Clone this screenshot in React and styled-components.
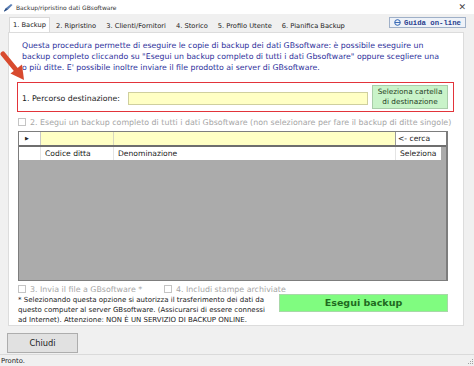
import React from "react";
import styled, { createGlobalStyle } from "styled-components";

const GlobalStyle = createGlobalStyle`
  html, body {
    margin: 0;
    padding: 0;
  }
  body {
    width: 474px;
    height: 366px;
    overflow: hidden;
    background: #f0f0f0;
    font-family: "DejaVu Sans", Verdana, sans-serif;
  }
`;

const Window = styled.div`
  position: relative;
  width: 474px;
  height: 366px;
  display: flex;
  flex-direction: column;
  background: #f0f0f0;
`;

const TitleBar = styled.div`
  height: 14px;
  flex: none;
  background: #fff;
  display: flex;
  align-items: center;
  gap: 3px;
  padding: 0 8px 0 3px;
  font-size: 6px;
  color: #333;
`;

const TitleText = styled.span`
  flex: 1;
`;

const Close = styled.span`
  font-size: 9px;
  color: #444;
`;

const TabBar = styled.div`
  height: 18px;
  flex: none;
  display: flex;
  align-items: flex-end;
  padding: 0 8px 0 9px;
`;

const Tab = styled.div`
  height: ${(p) => (p.active ? 15 : 13)}px;
  box-sizing: border-box;
  padding: 0 3px;
  margin-right: ${(p) => (p.active ? 2 : 2)}px;
  display: flex;
  align-items: center;
  font-size: 6.7px;
  color: #222;
  background: ${(p) => (p.active ? "#fff" : "#f0f0f0")};
  border: 1px solid ${(p) => (p.active ? "#d9d9d9" : "transparent")};
  border-bottom: none;
  white-space: nowrap;
`;

const GuideButton = styled.div`
  margin-left: auto;
  align-self: flex-start;
  margin-top: 3px;
  height: 11px;
  box-sizing: border-box;
  display: flex;
  align-items: center;
  gap: 3px;
  padding: 0 4px;
  background: #eef2f8;
  border: 1px solid #9fb0c8;
  font-family: "Liberation Mono", "DejaVu Sans Mono", monospace;
  font-weight: bold;
  font-size: 7.3px;
  color: #2a3f8f;
`;

const Panel = styled.div`
  height: 294px;
  flex: none;
  box-sizing: border-box;
  margin: 0 10px 0 8px;
  padding: 7px 9px 0 8px;
  background: #fff;
  border: 1px solid #dcdcdc;
  display: flex;
  flex-direction: column;
`;

const Intro = styled.div`
  padding-left: 5px;
  font-size: 7.8px;
  line-height: 11px;
  color: #2d2f9a;
  white-space: nowrap;
`;

const RedBox = styled.div`
  margin-top: 9px;
  width: 437px;
  height: 30px;
  box-sizing: border-box;
  border: 1.5px solid #e2343a;
  display: flex;
  align-items: center;
  padding: 0 5px 0 4px;
`;

const Label = styled.span`
  font-size: 7.8px;
  color: #222;
  white-space: nowrap;
  width: 106px;
  padding-top: 3px;
`;

const PathInput = styled.div`
  width: 240px;
  height: 13px;
  box-sizing: border-box;
  margin-top: 3px;
  background: #ffffc4;
  border: 1px solid #cfcf9e;
`;

const GreenButton = styled.div`
  margin-left: 4px;
  width: 76px;
  height: 24px;
  box-sizing: border-box;
  display: flex;
  align-items: center;
  justify-content: center;
  text-align: center;
  font-size: 7.3px;
  line-height: 10px;
  color: #1f3d1f;
  background: #c9f3c9;
  border: 1px solid #a9cda9;
`;

const CheckRow = styled.div`
  display: flex;
  align-items: center;
  gap: 4px;
  height: 11px;
  margin-left: 1px;
  font-size: ${(p) => p.size || 7.9}px;
  color: #a6a6a6;
  white-space: nowrap;
`;

const Box = styled.span`
  width: 8px;
  height: 8px;
  box-sizing: border-box;
  border: 1px solid #c4c4c4;
  background: #fff;
  flex: none;
`;

const Grid = styled.div`
  margin: 3px 0 0 1px;
  width: 430px;
  height: 151px;
  box-sizing: border-box;
  border: 1px solid #7d7d7d;
  border-right-width: 2px;
  background: #ababab;
  display: flex;
  flex-direction: column;
`;

const SearchRow = styled.div`
  height: 13px;
  flex: none;
  display: grid;
  grid-template-columns: 22px 73px 282px 1fr;
  border-bottom: 2px solid #6e6e6e;
`;

const Cell = styled.div`
  box-sizing: border-box;
  background: ${(p) => p.bg || "#fff"};
  border-right: 1px solid ${(p) => p.line || "#d8d8c0"};
  display: flex;
  align-items: center;
  padding-left: ${(p) => p.pad || 4}px;
  font-size: ${(p) => p.size || 7.6}px;
  color: #222;
  white-space: nowrap;
`;

const HeaderRow = styled.div`
  height: 13px;
  flex: none;
  display: grid;
  grid-template-columns: 22px 73px 282px 45px;
`;

const OptionsRow = styled.div`
  margin-top: 3px;
  display: flex;
  align-items: center;
`;

const BottomRow = styled.div`
  display: flex;
  align-items: flex-start;
  margin-left: 1px;
`;

const Note = styled.div`
  width: 261px;
  font-size: 7px;
  line-height: 10px;
  color: #222;
  white-space: nowrap;
`;

const RunButton = styled.div`
  margin-top: -1px;
  width: 169px;
  height: 18px;
  box-sizing: border-box;
  display: flex;
  align-items: center;
  justify-content: center;
  background: #80fc80;
  border: 1px solid #a8d8a8;
  font-weight: bold;
  font-size: 9.5px;
  color: #1f6a1f;
`;

const Footer = styled.div`
  height: 28px;
  flex: none;
  display: flex;
  align-items: flex-start;
  padding: 7px 0 0 7px;
  box-sizing: border-box;
`;

const CloseButton = styled.div`
  width: 71px;
  height: 20px;
  box-sizing: border-box;
  display: flex;
  align-items: center;
  justify-content: center;
  background: #e1e1e1;
  border: 1px solid #adadad;
  font-size: 8.3px;
  color: #222;
`;

const StatusBar = styled.div`
  height: 12px;
  flex: none;
  box-sizing: border-box;
  border-top: 1px solid #dadada;
  display: flex;
  align-items: center;
  justify-content: space-between;
  padding-left: 1px;
  font-size: 6.8px;
  color: #222;
`;

const Arrow = styled.svg`
  position: absolute;
  left: 0;
  top: 50px;
`;

const TitleIcon = () => (
  <svg width="10" height="9" viewBox="0 0 10 9">
    <polygon points="1,8 3,5 8,1 9.5,2 5,6.5 1.5,8.5" fill="#5a7fb5" />
    <polygon points="1,8 3,5 4.5,6.5 1.5,8.5" fill="#2f4f80" />
  </svg>
);

const GlobeIcon = () => (
  <svg width="7" height="7" viewBox="0 0 7 7">
    <circle cx="3.5" cy="3.5" r="2.8" fill="none" stroke="#2a5fb0" strokeWidth="1" />
    <line x1="1" y1="3.5" x2="6" y2="3.5" stroke="#2a5fb0" strokeWidth="0.9" />
  </svg>
);

const Grip = () => (
  <svg width="8" height="8" viewBox="0 0 8 8">
    {[
      [6, 2],
      [4, 4],
      [6, 4],
      [2, 6],
      [4, 6],
      [6, 6],
    ].map(([x, y]) => (
      <rect key={`${x}-${y}`} x={x} y={y} width="1" height="1" fill="#a0a0a0" />
    ))}
  </svg>
);

const tabs = [
  "1. Backup",
  "2. Ripristino",
  "3. Clienti/Fornitori",
  "4. Storico",
  "5. Profilo Utente",
  "6. Pianifica Backup",
];

const App = () => (
  <Window>
    <GlobalStyle />
    <TitleBar>
      <TitleIcon />
      <TitleText>Backup/ripristino dati GBsoftware</TitleText>
      <Close>✕</Close>
    </TitleBar>

    <TabBar>
      {tabs.map((t, i) => (
        <Tab key={t} active={i === 0}>
          {t}
        </Tab>
      ))}
      <GuideButton>
        <GlobeIcon />
        Guida on-line
      </GuideButton>
    </TabBar>

    <Panel>
      <Intro>
        Questa procedura permette di eseguire le copie di backup dei dati GBsoftware: è possibile eseguire un
        <br />
        backup completo cliccando su "Esegui un backup completo di tutti i dati Gbsoftware" oppure scegliere una
        <br />
        o più ditte. E' possibile inoltre inviare il file prodotto ai server di GBsoftware.
      </Intro>

      <RedBox>
        <Label>1. Percorso destinazione:</Label>
        <PathInput />
        <GreenButton>
          Seleziona cartella
          <br />
          di destinazione
        </GreenButton>
      </RedBox>

      <CheckRow style={{ marginTop: 5 }}>
        <Box />
        2. Esegui un backup completo di tutti i dati Gbsoftware (non selezionare per fare il backup di ditte singole)
      </CheckRow>

      <Grid>
        <SearchRow>
          <Cell pad={6} size={5} line="#c8c8c8">
            ▶
          </Cell>
          <Cell bg="#ffffc4" />
          <Cell bg="#ffffc4" line="#9a9a9a" />
          <Cell pad={2} line="transparent">
            &lt;- cerca
          </Cell>
        </SearchRow>
        <HeaderRow>
          <Cell line="#e4e4e4" />
          <Cell line="#e4e4e4">Codice ditta</Cell>
          <Cell line="#e4e4e4">Denominazione</Cell>
          <Cell line="transparent">Seleziona</Cell>
        </HeaderRow>
      </Grid>

      <OptionsRow>
        <CheckRow style={{ width: 145 }}>
          <Box />
          3. Invia il file a GBsoftware *
        </CheckRow>
        <CheckRow>
          <Box />
          4. Includi stampe archiviate
        </CheckRow>
      </OptionsRow>

      <BottomRow>
        <Note>
          * Selezionando questa opzione si autorizza il trasferimento dei dati da
          <br />
          questo computer al server GBsoftware. (Assicurarsi di essere connessi
          <br />
          ad Internet). Attenzione: NON È UN SERVIZIO DI BACKUP ONLINE.
        </Note>
        <RunButton>Esegui backup</RunButton>
      </BottomRow>
    </Panel>

    <Footer>
      <CloseButton>Chiudi</CloseButton>
    </Footer>

    <StatusBar>
      Pronto.
      <Grip />
    </StatusBar>

    <Arrow width="32" height="36" viewBox="0 0 32 36">
      <line x1="3" y1="4" x2="17" y2="21" stroke="#d84a2e" strokeWidth="5" strokeLinecap="round" />
      <polygon points="24,30 22,14.5 10.5,23.5" fill="#d84a2e" />
    </Arrow>
  </Window>
);

export default App;
